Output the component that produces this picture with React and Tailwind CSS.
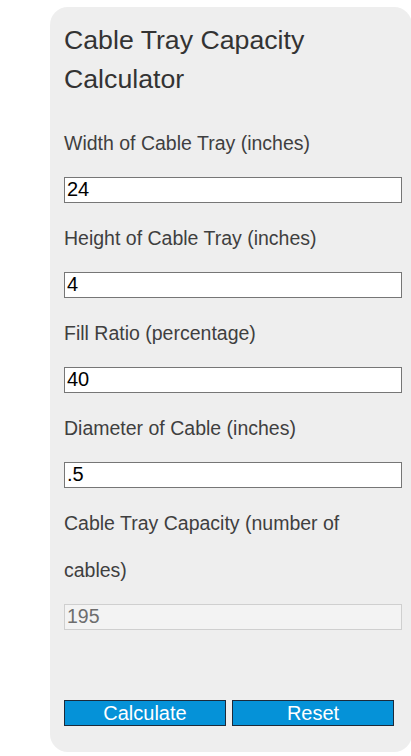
export default function App() {
  const font = { fontFamily: '"Liberation Sans", Arial, sans-serif' };
  const fields = [
    ["Width of Cable Tray (inches)", "24"],
    ["Height of Cable Tray (inches)", "4"],
    ["Fill Ratio (percentage)", "40"],
    ["Diameter of Cable (inches)", ".5"],
  ];
  return (
    <div className="min-h-[756px] w-[411px] overflow-hidden bg-white pl-[50px] pt-[7px]" style={font}>
      <div className="w-[362px] rounded-[18px] bg-[#eeeeee] pl-[14px] pt-[13.5px] pb-[26px]">
        <h1 className="text-[26.7px] leading-[39px] text-[#333333] font-normal w-[300px]">
          Cable Tray Capacity Calculator
        </h1>
        <div className="mt-[21.5px]">
          {fields.map(([label, value]) => (
            <div key={label} className="h-[95px]">
              <div className="text-[19.5px] leading-[47px] h-[47px] text-[#3f3f3f] mb-[9.5px]">{label}</div>
              <input
                readOnly
                value={value}
                className="block w-[338px] h-[26px] border border-[#767676] bg-white pl-[2px] text-[20px] leading-[24px] text-black outline-none"
                style={font}
              />
            </div>
          ))}
          <div className="text-[19.5px] leading-[47px] text-[#3f3f3f] mb-[9.5px] w-[300px]">
            Cable Tray Capacity (number of cables)
          </div>
          <input
            readOnly
            value="195"
            className="block w-[338px] h-[26px] border border-[#cfcfcf] bg-[#f3f3f3] pl-[2px] text-[19.5px] leading-[24px] text-[#6d6d6d] outline-none"
            style={font}
          />
        </div>
        <div className="mt-[70.5px] flex gap-[6px]">
          <button className="w-[162px] h-[26px] bg-[#0592d8] border border-[#1c2a3a] text-white text-[20px] leading-[24px]" style={font}>
            Calculate
          </button>
          <button className="w-[162px] h-[26px] bg-[#0592d8] border border-[#1c2a3a] text-white text-[20px] leading-[24px]" style={font}>
            Reset
          </button>
        </div>
      </div>
    </div>
  );
}
